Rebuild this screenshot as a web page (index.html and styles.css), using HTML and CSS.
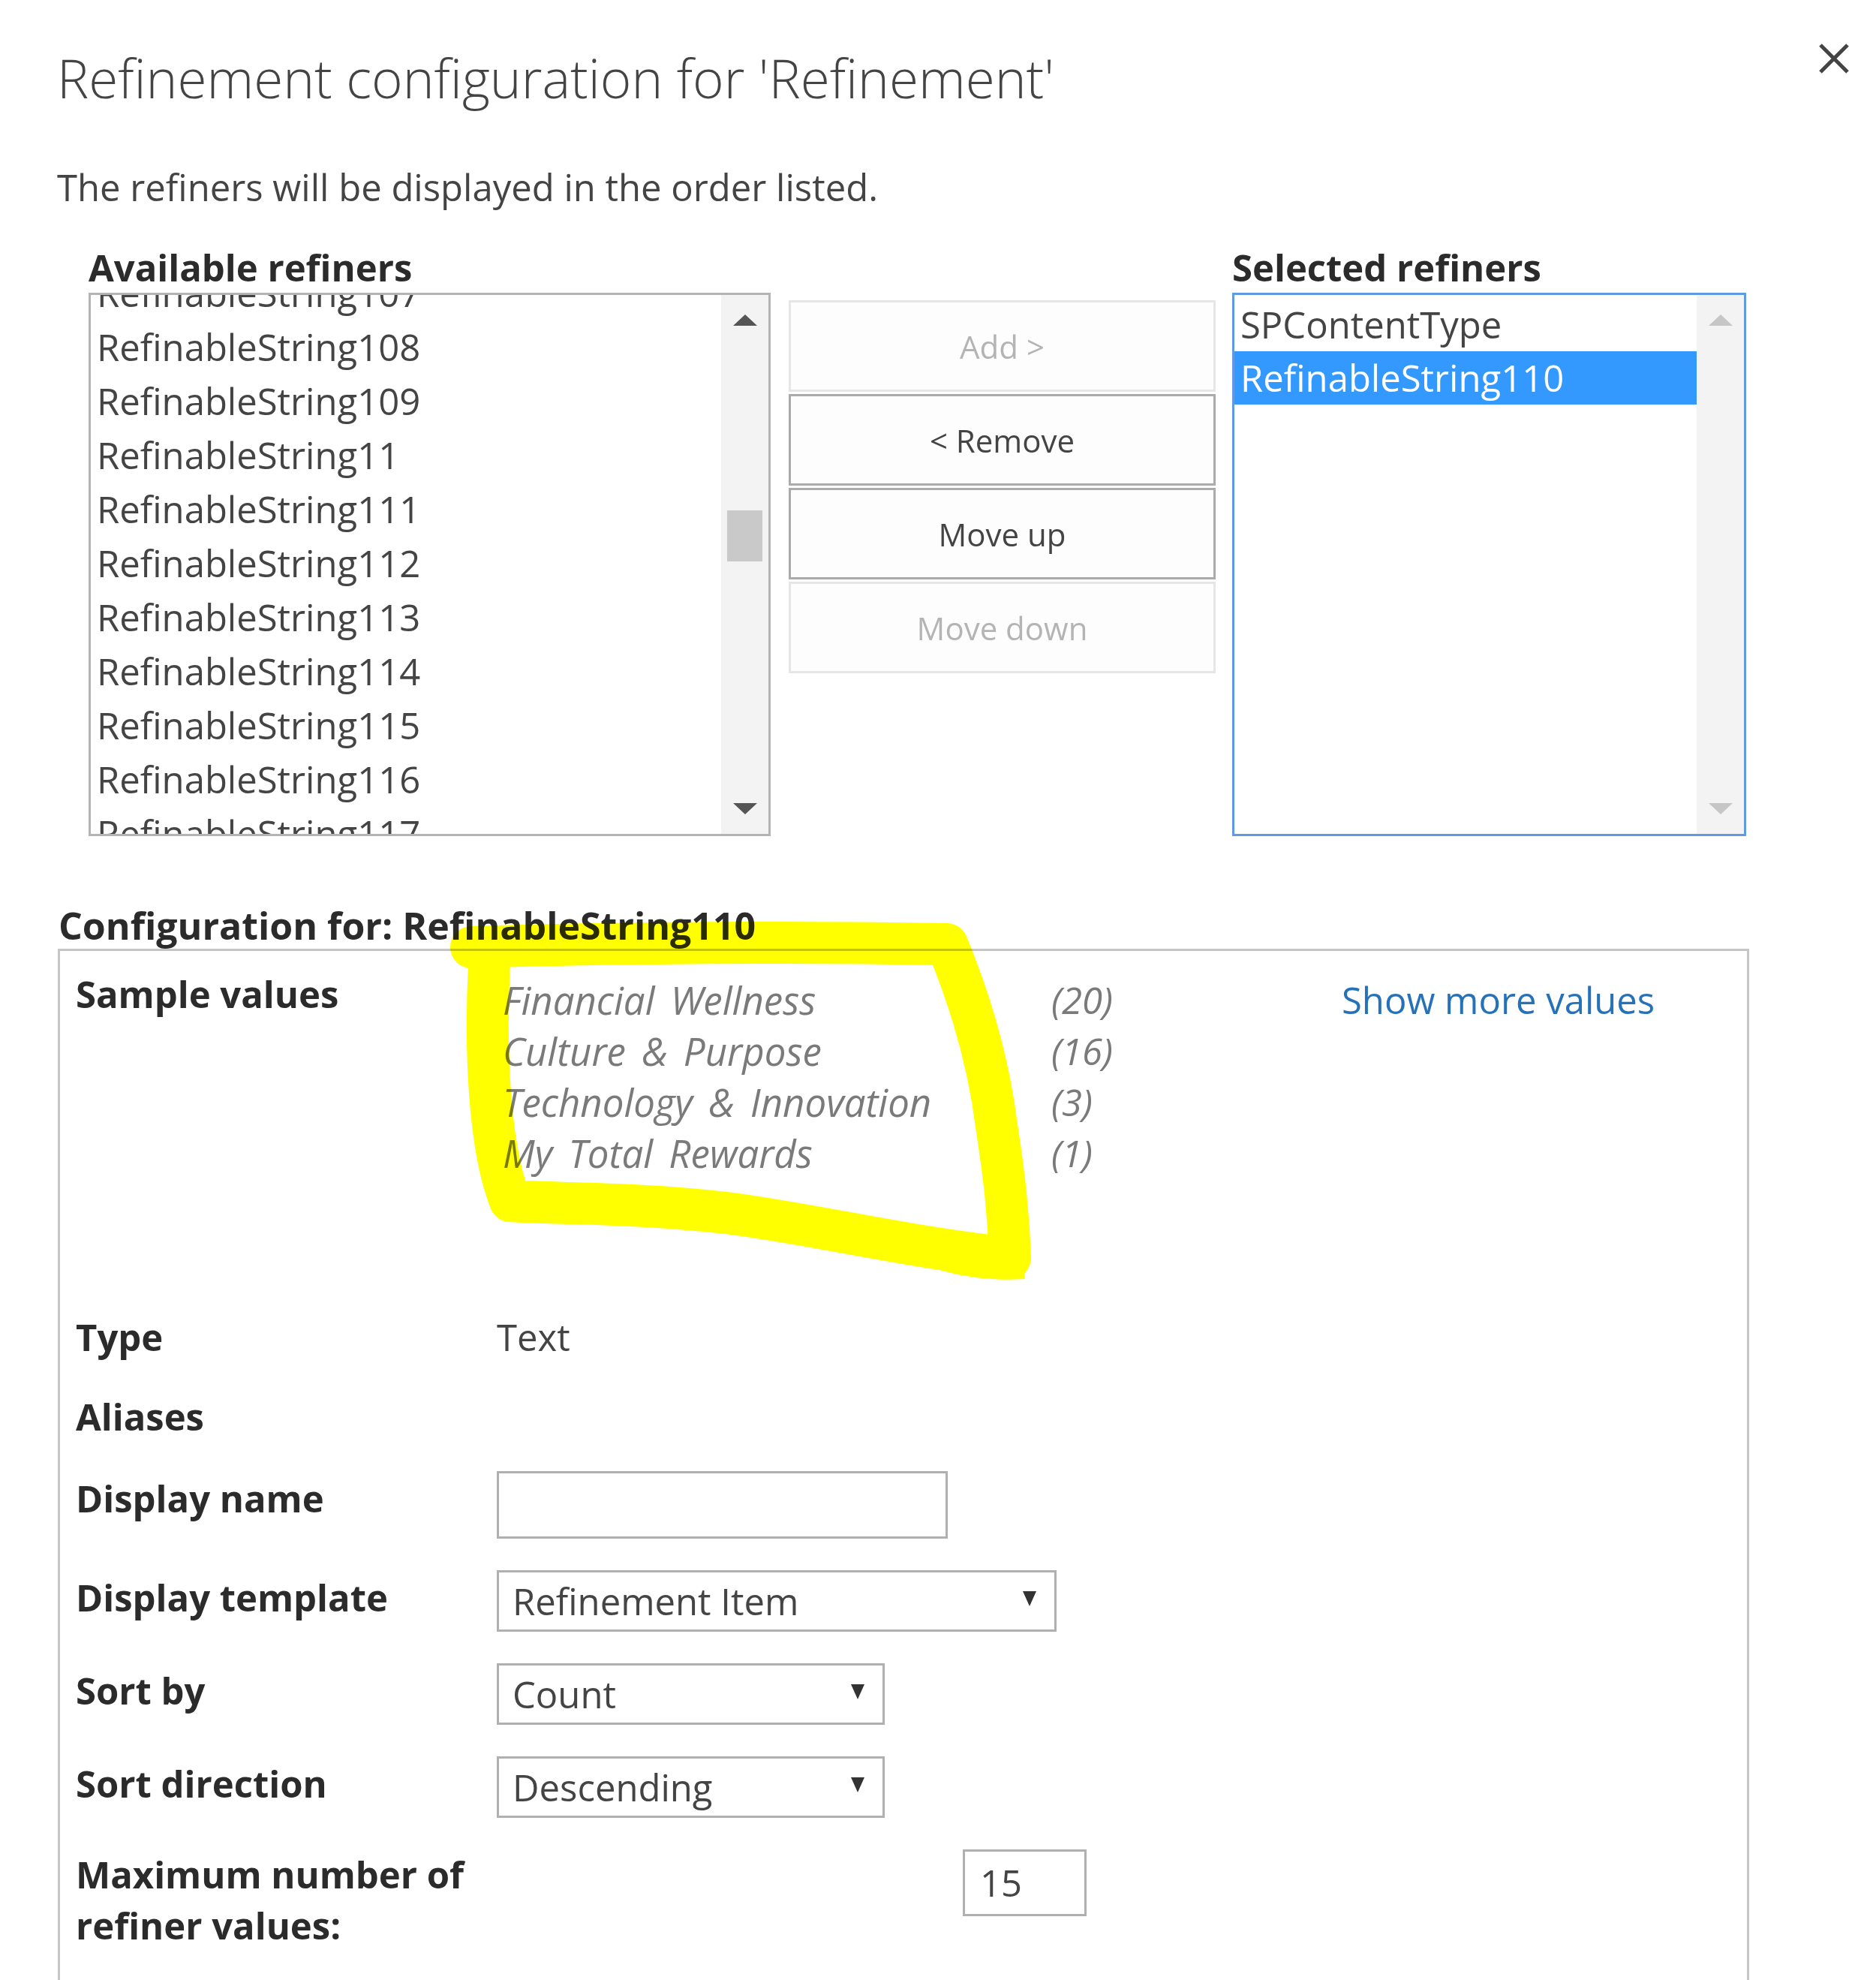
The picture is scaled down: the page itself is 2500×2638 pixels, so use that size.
FILE: index.html
```html
<!DOCTYPE html>
<html lang="en">
<head>
    <meta charset="UTF-8">
    <title>Refinement configuration</title>
    <link rel="stylesheet" href="styles.css">
</head>
<body>

<div class="dialog">
    <header class="dialog-head">
        <h1>Refinement configuration for 'Refinement'</h1>
        <button class="close" title="Close">
            <svg viewBox="0 0 46 46" width="46" height="46">
                <path d="M5 5 L41 41 M41 5 L5 41" stroke="#444" stroke-width="5" fill="none"/>
            </svg>
        </button>
    </header>

    <p class="intro">The refiners will be displayed in the order listed.</p>

    <div class="picker">
        <!-- Available refiners -->
        <div class="picker-col available">
            <div class="col-label">Available refiners</div>
            <div class="listbox">
                <ul class="options scrolled">
                    <li>RefinableString107</li>
                    <li>RefinableString108</li>
                    <li>RefinableString109</li>
                    <li>RefinableString11</li>
                    <li>RefinableString111</li>
                    <li>RefinableString112</li>
                    <li>RefinableString113</li>
                    <li>RefinableString114</li>
                    <li>RefinableString115</li>
                    <li>RefinableString116</li>
                    <li>RefinableString117</li>
                </ul>
                <div class="scrollbar">
                    <span class="arrow up"></span>
                    <span class="thumb"></span>
                    <span class="arrow down"></span>
                </div>
            </div>
        </div>

        <!-- Move buttons -->
        <div class="picker-buttons">
            <button class="btn" disabled>Add &gt;</button>
            <button class="btn">&lt; Remove</button>
            <button class="btn">Move up</button>
            <button class="btn" disabled>Move down</button>
        </div>

        <!-- Selected refiners -->
        <div class="picker-col selected">
            <div class="col-label">Selected refiners</div>
            <div class="listbox focused">
                <ul class="options">
                    <li>SPContentType</li>
                    <li class="active">RefinableString110</li>
                </ul>
                <div class="scrollbar idle">
                    <span class="arrow up"></span>
                    <span class="arrow down"></span>
                </div>
            </div>
        </div>
    </div>

    <div class="config-label">Configuration for: RefinableString110</div>
    <div class="config-box">
        <div class="row samples-row">
            <div class="row-label">Sample values</div>
            <div class="samples">
                <ul class="sample-list names">
                    <li>Financial Wellness</li>
                    <li>Culture &amp; Purpose</li>
                    <li>Technology &amp; Innovation</li>
                    <li>My Total Rewards</li>
                </ul>
                <ul class="sample-list">
                    <li>(20)</li>
                    <li>(16)</li>
                    <li>(3)</li>
                    <li>(1)</li>
                </ul>
                <a class="more" href="#">Show more values</a>
            </div>
        </div>

        <div class="row type-row">
            <div class="row-label">Type</div>
            <div class="row-value">Text</div>
        </div>

        <div class="row aliases-row">
            <div class="row-label">Aliases</div>
            <div class="row-value"></div>
        </div>

        <div class="row">
            <div class="row-label field-label">Display name</div>
            <div class="text-input"></div>
        </div>

        <div class="row">
            <div class="row-label field-label">Display template</div>
            <div class="select wide"><span>Refinement Item</span><span class="caret"></span></div>
        </div>

        <div class="row">
            <div class="row-label field-label">Sort by</div>
            <div class="select"><span>Count</span><span class="caret"></span></div>
        </div>

        <div class="row">
            <div class="row-label field-label">Sort direction</div>
            <div class="select"><span>Descending</span><span class="caret"></span></div>
        </div>

        <div class="row max-row">
            <div class="row-label">Maximum number of<br>refiner values:</div>
            <div class="number-input">15</div>
        </div>
    </div>

    <!-- hand drawn marker around the sample values -->
    <svg class="highlight" viewBox="0 0 2500 2638" width="2500" height="2638">
        <path d="M628 1262 C 820 1256, 1060 1254, 1262 1258
                 C 1296 1340, 1318 1420, 1328 1500
                 C 1338 1565, 1344 1615, 1346 1676
                 C 1220 1664, 1080 1630, 968 1616
                 C 848 1602, 738 1604, 680 1600
                 C 652 1530, 646 1400, 652 1285"
              fill="none" stroke="#ffff00" stroke-width="56" stroke-linejoin="round" stroke-linecap="round"/>
        <path d="M1260 1640 C 1320 1650, 1362 1665, 1366 1704 C 1310 1708, 1250 1696, 1212 1676 Z" fill="#ffff00"/>
    </svg>
</div>

</body>
</html>
```

FILE: styles.css
```css
/* General */
*, *::before, *::after {
    box-sizing: border-box;
}
body {
    margin: 0;
    font-family: "Open Sans", "Noto Sans", sans-serif;
    color: #444;
    background-color: #fff;
}
ul {
    list-style: none;
    margin: 0;
    padding: 0;
}

.dialog {
    position: relative;
    min-height: 2638px;
    padding: 54px 33px 0 76px;
    overflow: hidden;
}

/* Header */
.dialog-head {
    display: flex;
    justify-content: space-between;
    align-items: flex-start;
}
.dialog-head h1 {
    margin: 0;
    font-size: 71px;
    font-weight: 300;
    line-height: 100px;
    color: #444;
}
.close {
    width: 46px;
    height: 46px;
    margin-top: 1px;
    padding: 0;
    border: none;
    background: none;
}
.intro {
    margin: 65px 0 0;
    font-size: 49px;
    line-height: 60px;
}

/* Refiner picker */
.picker {
    display: flex;
    margin: 47px 0 0 42px;
}
.available {
    width: 909px;
    margin-right: 24px;
}
.selected {
    width: 685px;
    margin-left: 22px;
}
.col-label, .config-label, .row-label {
    font-size: 49px;
    font-weight: 700;
    line-height: 60px;
    color: #2b2b2b;
}
.listbox {
    display: flex;
    height: 724px;
    margin-top: 4px;
    border: 3px solid #b4b4b4;
    overflow: hidden;
}
.listbox.focused {
    border-color: #5e9be3;
}
.options {
    flex: 1;
    font-size: 49px;
    line-height: 72px;
}
.options li {
    padding-left: 8px;
    white-space: nowrap;
}
.options.scrolled {
    margin-top: -39px;
}
.focused .options {
    padding-top: 4px;
    line-height: 71px;
}
.options li.active {
    background-color: #3399ff;
    color: #fff;
}
.scrollbar {
    display: flex;
    flex-direction: column;
    align-items: center;
    width: 63px;
    background-color: #f3f3f3;
}
.arrow {
    width: 0;
    height: 0;
    border-left: 16px solid transparent;
    border-right: 16px solid transparent;
}
.arrow.up {
    margin-top: 26px;
    border-bottom: 15px solid #555;
}
.arrow.down {
    margin-top: auto;
    margin-bottom: 26px;
    border-top: 15px solid #555;
}
.idle .arrow.up {
    border-bottom-color: #c6c6c6;
}
.idle .arrow.down {
    border-top-color: #c6c6c6;
}
.thumb {
    width: 47px;
    height: 68px;
    margin-top: 246px;
    background-color: #c9c9c9;
}

.picker-buttons {
    display: flex;
    flex-direction: column;
    gap: 3px;
    width: 569px;
    margin-top: 74px;
}
.btn {
    height: 122px;
    border: 3px solid #ababab;
    background-color: #fdfdfd;
    font-family: inherit;
    font-size: 42px;
    color: #444;
}
.btn:disabled {
    border-color: #e6e6e6;
    color: #b4b4b4;
}

/* Configuration */
.config-label {
    margin: 89px 0 0 2px;
    font-size: 50px;
}
.config-box {
    width: 2254px;
    margin: 1px 0 0 1px;
    padding: 27px 21px 200px;
    border: 3px solid #c6c6c6;
}
.row {
    display: grid;
    grid-template-columns: 561px 1fr;
    align-items: start;
    margin-bottom: 42px;
}
.row-value {
    font-size: 49px;
    line-height: 60px;
}
.samples-row {
    margin-bottom: 181px;
}
.type-row {
    margin-bottom: 46px;
}
.aliases-row {
    margin-bottom: 43px;
}
.samples {
    display: grid;
    grid-template-columns: 739px 387px auto;
    padding-top: 4px;
    font-size: 49px;
    line-height: 68px;
}
.sample-list {
    font-style: italic;
    color: #7a7a7a;
}
.sample-list.names {
    padding-left: 8px;
    font-size: 51px;
    word-spacing: 8px;
}
.more {
    color: #2672b8;
    text-decoration: none;
}
.field-label {
    margin-top: 6px;
}
.text-input {
    width: 601px;
    height: 90px;
    border: 3px solid #b0b0b0;
}
.select {
    display: flex;
    justify-content: space-between;
    align-items: center;
    width: 517px;
    height: 82px;
    padding: 0 24px 0 18px;
    border: 3px solid #b0b0b0;
    font-size: 49px;
}
.select.wide {
    width: 746px;
}
.caret {
    width: 0;
    height: 0;
    margin-bottom: 6px;
    border-left: 9px solid transparent;
    border-right: 9px solid transparent;
    border-top: 20px solid #333;
}
.max-row .row-label {
    margin-top: -1px;
    line-height: 68px;
}
.number-input {
    width: 165px;
    height: 89px;
    margin-left: 621px;
    padding-left: 20px;
    border: 3px solid #b0b0b0;
    font-size: 49px;
    line-height: 83px;
}

/* Marker */
.highlight {
    position: absolute;
    top: 0;
    left: 0;
    pointer-events: none;
    mix-blend-mode: multiply;
}
```
